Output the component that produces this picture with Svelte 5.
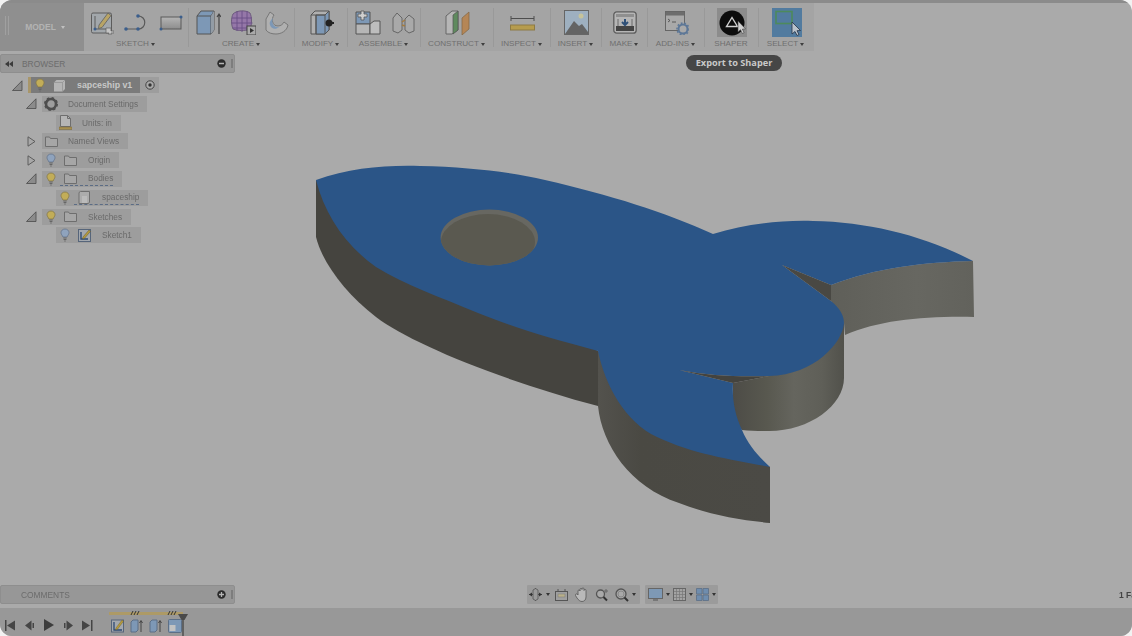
<script>
  const rows = [
    { lv: 1, exp: 'open', icon: 'gear', label: 'Document Settings' },
    { lv: 2, icon: 'doc', label: 'Units: in' },
    { lv: 1, exp: 'closed', icon: 'folder', label: 'Named Views' },
    { lv: 1, exp: 'closed', bulb: 'blue', icon: 'folder', label: 'Origin' },
    { lv: 1, exp: 'open', bulb: 'yellow', icon: 'folder', label: 'Bodies', wavy: true },
    { lv: 2, bulb: 'yellow', icon: 'body', label: 'spaceship', wavy: true },
    { lv: 1, exp: 'open', bulb: 'yellow', icon: 'folder', label: 'Sketches' },
    { lv: 2, bulb: 'blue', icon: 'sketch', label: 'Sketch1' }
  ];
</script>

{#snippet bulb(color)}
  <svg width="10" height="14" viewBox="0 0 10 14">
    <path d="M5 1C2.6 1 1 2.7 1 4.7c0 1.7 1.4 2.6 1.9 4.3h4.2C7.6 7.300 9 6.400 9 4.700 9 2.700 7.400 1 5 1z" fill={color === 'yellow' ? '#c2ad58' : '#8fa3bd'} stroke={color === 'yellow' ? '#85784a' : '#66758c'} stroke-width=".8"/>
    <path d="M3.300 10h3.400M3.600 11.500h2.800M4.300 13h1.400" stroke="#666" stroke-width="1"/>
  </svg>
{/snippet}

{#snippet folder()}
  <svg width="13" height="11" viewBox="0 0 13 11"><path d="M.5 10.500V1h4l1 1.500h7v8z" fill="#a6a6a6" stroke="#6e6e6e"/></svg>
{/snippet}

{#snippet treeIcon(name)}
  {#if name === 'gear'}
    <svg width="14" height="14" viewBox="0 0 14 14"><circle cx="7" cy="7" r="5" fill="none" stroke="#4e4e4e" stroke-width="2.600"/><circle cx="7" cy="7" r="6" fill="none" stroke="#4e4e4e" stroke-width="2" stroke-dasharray="2.400 2.300"/></svg>
  {:else if name === 'doc'}
    <svg width="13" height="15" viewBox="0 0 13 15"><path d="M1.500 11.500V.5h7l3 3v8z" fill="#b5b5b5" stroke="#6e6e6e"/><path d="M8.500.5v3h3" fill="none" stroke="#6e6e6e"/><path d="M0 12h13v2.500H0z" fill="#a68f50" stroke="#75663c" stroke-width=".5"/></svg>
  {:else if name === 'folder'}
    {@render folder()}
  {:else if name === 'body'}
    <svg width="13" height="13" viewBox="0 0 13 13"><path d="M1 12.500V1.500L2.500.5h9V11l-1 1.500z" fill="#acacac" stroke="#6e6e6e"/><path d="M4 5h5v7H4z" fill="#bbb"/></svg>
  {:else}
    <svg width="13" height="13" viewBox="0 0 13 13"><rect x=".5" y=".5" width="12" height="12" fill="#a3a8ae" stroke="#56657a"/><path d="M3 3v7h7" fill="none" stroke="#2e4a73" stroke-width="1.400"/><path d="M5 8l6-7 1.500 1.300-6 7L4.500 10z" fill="#b69c3c" stroke="#65572a" stroke-width=".5"/></svg>
  {/if}
{/snippet}

{#snippet caret()}<i class="caret"></i>{/snippet}

{#snippet panelEnd(plus)}
  <svg class="pm" width="9" height="9" viewBox="0 0 9 9"><circle cx="4.500" cy="4.500" r="4.200" fill="#2b2b2b"/><path d={plus ? 'M2 4.500h5M4.500 2v5' : 'M2 4.500h5'} stroke="#b5b5b5" stroke-width="1.300"/></svg>
  <i class="grip"></i>
{/snippet}

<div class="frame">
  <svg class="scene" viewBox="0 0 1132 636" width="1132" height="636">
    <defs>
      <linearGradient id="gBody" x1="733" x2="844" y1="0" y2="0" gradientUnits="userSpaceOnUse">
        <stop offset="0" stop-color="#4d4c47"/><stop offset=".3" stop-color="#58584f"/><stop offset=".55" stop-color="#65655e"/><stop offset=".8" stop-color="#5f5f58"/><stop offset="1" stop-color="#51514b"/>
      </linearGradient>
      <linearGradient id="gFinUp" x1="831" x2="974" y1="0" y2="0" gradientUnits="userSpaceOnUse">
        <stop offset="0" stop-color="#5f5f59"/><stop offset=".6" stop-color="#676761"/><stop offset="1" stop-color="#62625c"/>
      </linearGradient>
      <linearGradient id="gFin" x1="598" x2="770" y1="0" y2="0" gradientUnits="userSpaceOnUse">
        <stop offset="0" stop-color="#53524d"/><stop offset=".25" stop-color="#4a4943"/><stop offset="1" stop-color="#4b4a45"/>
      </linearGradient>
      <clipPath id="holeClip"><ellipse cx="489.300" cy="237.500" rx="48.700" ry="28"/></clipPath>
    </defs>
    <path d="M316 180V237C322 262 345 293 376 317C410 343 500 380 598 406V351Z" fill="#45443f"/>
    <path d="M598 351V406C602 445 630 487 679 503C710 515 740 520 770 523V467L650 400Z" fill="url(#gFin)"/>
    <path d="M733 383V403C733 415 738 425 742 430C750 431 760 431 769 431C810 431 844 405 844 378V323L769 376Z" fill="url(#gBody)"/>
    <path d="M831 285C875 268 925 262 973 261L974 317C925 316 880 320 845 335L844 323L831 301Z" fill="url(#gFinUp)"/>
    <path d="M316 180C350 168 385 165 420 166C470 167 510 172 545 180C610 195 665 212 713 234C745 224 780 220 813 221C870 222 925 236 973 261C925 262 875 268 831 285L782 265L831 301C840 308 844 316 844 323C843 342 815 375 769 376C740 377 710 376 679 370L733 383C732 400 735 415 742 430C748 445 760 458 770 467C735 460 695 455 657 437C625 422 605 385 598 351C545 337 510 326 478 313C440 297 405 285 376 267C345 245 325 215 316 180Z" fill="#2b5587"/>
    <path d="M782 265L831 285V301Z" fill="#494843"/>
    <path d="M679 370L733 383L769 376C740 377 710 376 679 370Z" fill="#44433e"/>
    <ellipse cx="489.300" cy="237.500" rx="48.700" ry="28" fill="#676761"/>
    <g clip-path="url(#holeClip)"><ellipse cx="488" cy="242" rx="47" ry="28" fill="#5a5950"/></g>
  </svg>

  <div class="strip"></div>

  <header class="toolbar">
    <div class="model"><i class="handle"></i><span>MODEL</span><i class="caret light"></i></div>

    <section class="group w105">
      <div class="icons g10">
        <svg width="23" height="24" viewBox="0 0 23 24"><rect x=".5" y="2" width="20" height="20" rx="1.500" fill="#a2a7ab" stroke="#5c5c5c"/><path d="M4 5v13h13" fill="none" stroke="#5c5c5c"/><circle cx="4" cy="18" r="1.500" fill="#3b5e8c"/><path d="M8 14L17 2l3 2.500-9 12-3.500 1z" fill="#b8a466" stroke="#5e5e5e" stroke-width=".8"/><path d="M15 17h3v-0h2v3h3v2h-3v2h-2v-2h-3z" fill="#c4c4c4" stroke="#5e5e5e" stroke-width=".7"/></svg>
        <svg width="25" height="18" viewBox="0 0 25 18"><path d="M2 15H14C23 15 23 2 14 2" fill="none" stroke="#5a5a5a" stroke-width="1.200"/><g fill="#3b5e8c"><circle cx="2" cy="15" r="1.800"/><circle cx="14" cy="15" r="1.800"/><circle cx="14" cy="2" r="1.800"/></g></svg>
        <svg width="24" height="16" viewBox="0 0 24 16"><defs><linearGradient id="rc" x1="0" y1="0" x2="0" y2="1"><stop offset="0" stop-color="#b5b5b5"/><stop offset="1" stop-color="#8d8d8d"/></linearGradient></defs><rect x="2" y="2" width="20" height="12" fill="url(#rc)" stroke="#5a5a5a"/><g fill="#3b5e8c"><circle cx="22" cy="2" r="1.500"/><circle cx="2" cy="14" r="1.500"/></g></svg>
      </div>
      <div class="label">SKETCH{@render caret()}</div>
    </section>

    <section class="group w106">
      <div class="icons g9">
        <svg width="25" height="25" viewBox="0 0 25 25"><path d="M1 6l4-5h13v19l-3 4H1z" fill="#7d98b6" stroke="#555"/><path d="M1 6h14v18M15 6l3-5" fill="none" stroke="#555"/><path d="M15 6l3-5v19l-3 4z" fill="#939ca5"/><path d="M23 24V5M21 7l2-3 2 3" fill="none" stroke="#444" stroke-width="1.200"/></svg>
        <svg width="26" height="25" viewBox="0 0 26 25"><path d="M3 4C7 0 16 0 20 3c2 4 2 12 0 16-5 2-12 2-17 0-2-5-2-11 0-15z" fill="#9577a8" stroke="#6d5b7d"/><path d="M2 8h20M1.500 13h21M3 18h18M7 1v20M12 1v21M17 1v20" stroke="#6a4e86" stroke-width=".9"/><rect x="17" y="16" width="9" height="9" fill="#aaa" stroke="#444"/><path d="M20 18l4 2.500-4 2.500z" fill="#333"/></svg>
        <svg width="24" height="24" viewBox="0 0 24 24"><path d="M5 1l4 3c-3 4-2 11 4 11 3 0 5-2 6-4l4 3c-1 6-7 9-12 9-4 0-8-1-10-4V8z" fill="#b0b0b0" stroke="#777"/><path d="M8 7c-2 5 1 10 6 9-3 3-8 2-9-2-1-3 1-5 3-7z" fill="#7d98b6"/></svg>
      </div>
      <div class="label">CREATE{@render caret()}</div>
    </section>

    <section class="group w53">
      <div class="icons">
        <svg width="25" height="25" viewBox="0 0 25 25"><path d="M2 5l4-4h14v19l-4 4H2z" fill="#b0b0b0" stroke="#555"/><path d="M7 5h9l4-4v19l-4 4H7z" fill="#7d98b6" stroke="#555"/><path d="M7 5v19M2 5h14v19" fill="none" stroke="#555"/><circle cx="20" cy="13" r="3.500" fill="#222"/><path d="M20 13h5" stroke="#222" stroke-width="2"/></svg>
      </div>
      <div class="label">MODIFY{@render caret()}</div>
    </section>

    <section class="group w73">
      <div class="icons g10">
        <svg width="26" height="25" viewBox="0 0 26 25"><path d="M1 2h14v12H1z" fill="#7d98b6" stroke="#555"/><path d="M1 14h14v10H1z" fill="#b6b6b6" stroke="#555"/><path d="M15 14l4-3h6v13H15z" fill="#bdbdbd" stroke="#555"/><path d="M3 4h3V1h3v3h3v3H9v3H6V7H3z" fill="#cfcfcf" stroke="#555" stroke-width=".8"/></svg>
        <svg width="24" height="22" viewBox="0 0 24 22"><path d="M2 19V6l4-5 5 5v12l-4 3z" fill="#a9a9a9" stroke="#666"/><path d="M14 7l4-4 5 4v12l-5 2-4-3z" fill="#a9a9a9" stroke="#666"/><path d="M11 10l3-2M11 13l3 1" stroke="#a37a3e" stroke-width="1.500"/></svg>
      </div>
      <div class="label">ASSEMBLE{@render caret()}</div>
    </section>

    <section class="group w73">
      <div class="icons">
        <svg width="25" height="25" viewBox="0 0 25 25"><path d="M1 6l6-5h6v19l-6 4H1z" fill="#b6b6b6" stroke="#666"/><path d="M8 5l5-4v19l-5 4z" fill="#5f8a5e" stroke="#555" stroke-width=".7"/><path d="M17 8l7-6v17l-7 6z" fill="#b58656" stroke="#826544" stroke-width=".7"/></svg>
      </div>
      <div class="label">CONSTRUCT{@render caret()}</div>
    </section>

    <section class="group w57">
      <div class="icons">
        <svg width="25" height="16" viewBox="0 0 25 16"><path d="M1 1v5M24 1v5M1 3.500h23" stroke="#4d4d4d"/><rect x=".5" y="10" width="24" height="5" fill="#b69c4e" stroke="#8d7a44"/></svg>
      </div>
      <div class="label">INSPECT{@render caret()}</div>
    </section>

    <section class="group w51">
      <div class="icons">
        <svg width="25" height="25" viewBox="0 0 25 25"><rect x=".5" y=".5" width="24" height="24" fill="#9eb0c0" stroke="#666"/><circle cx="17" cy="6" r="2.500" fill="#c6c39a"/><path d="M1 24L10 11l5 5 3-2 6 8v2z" fill="#646464"/></svg>
      </div>
      <div class="label">INSERT{@render caret()}</div>
    </section>

    <section class="group w46">
      <div class="icons">
        <svg width="24" height="23" viewBox="0 0 24 23"><rect x=".8" y=".8" width="22.400" height="21.400" rx="3" fill="#b5b5b5" stroke="#5e5e5e" stroke-width="1.300"/><rect x="3" y="3" width="18" height="3" fill="#8f8f8f"/><rect x="3" y="15" width="18" height="5" fill="#444"/><path d="M5 8v7M19 8v7" stroke="#6b6b6b"/><path d="M12 8v5M9 11l3 3 3-3" fill="none" stroke="#2f5078" stroke-width="2"/></svg>
      </div>
      <div class="label">MAKE{@render caret()}</div>
    </section>

    <section class="group w57">
      <div class="icons">
        <svg width="24" height="24" viewBox="0 0 24 24"><rect x=".5" y=".5" width="19" height="19" fill="#a9a9a9" stroke="#666"/><rect x="1" y="1" width="18" height="3.500" fill="#6d6d6d"/><path d="M3 8l2 1.500L3 11M7 11h4" fill="none" stroke="#444" stroke-width=".8"/><circle cx="18" cy="18" r="4.500" fill="#a9a9a9" stroke="#5d7797" stroke-width="2"/><circle cx="18" cy="18" r="6" fill="none" stroke="#5d7797" stroke-width="1.500" stroke-dasharray="1.800 1.800"/></svg>
      </div>
      <div class="label">ADD-INS{@render caret()}</div>
    </section>

    <section class="group w54">
      <div class="icons">
        <div class="hl">
          <svg width="30" height="29" viewBox="0 0 30 29"><circle cx="15" cy="15" r="12.500" fill="#0c0c0c"/><path d="M15 9.500l5.500 9h-11z" fill="none" stroke="#d0d0d0" stroke-width="1.400"/><path d="M21 13v11l2.500-2.300 1.800 3.800 1.800-.8-1.700-3.600 3.200-.2z" fill="#cfcfcf" stroke="#444" stroke-width=".6"/></svg>
        </div>
      </div>
      <div class="label plain">SHAPER</div>
    </section>

    <section class="group w55 last">
      <div class="icons">
        <div class="hl blue">
          <svg width="30" height="29" viewBox="0 0 30 29"><rect x="4" y="3.500" width="16" height="12" fill="none" stroke="#4d8a5c" stroke-width="1.600"/><path d="M20 14v12l3-2.500 2 4 2-1-2-3.800 3.500-.2z" fill="#b9c2cb" stroke="#263245" stroke-width=".8"/></svg>
        </div>
      </div>
      <div class="label">SELECT{@render caret()}</div>
    </section>
  </header>

  <div class="tip">Export to Shaper</div>

  <main class="main">
    <div class="side">
      <div class="panel">
        <svg class="back" width="8" height="6" viewBox="0 0 8 6"><path d="M4 0v6L0 3zM8 0v6L4 3z" fill="#3b3b3b"/></svg>
        <span class="ptitle">BROWSER</span>
        {@render panelEnd(false)}
      </div>

      <div class="tree">
        <div class="row lv0">
          <span class="exp"><svg width="11" height="11" viewBox="0 0 11 11"><path d="M.5 10.500L10 .8v9.700z" fill="#8b8b8b" stroke="#4a4a4a" stroke-width=".8"/></svg></span>
          <div class="rootpill">
            <div class="sel">
              <span class="slot">{@render bulb('yellow')}</span>
              <span class="slot b"><svg width="13" height="13" viewBox="0 0 13 13"><path d="M1 3.500L3.500 1h8.500v9L9.500 12.500H1z" fill="#b5b5b5"/><path d="M9.500 3.500H1M9.500 3.500V12.500M9.500 3.500L12 1" stroke="#8f8f8f" stroke-width=".7" fill="none"/></svg></span>
              <span class="rootname">sapceship v1</span>
            </div>
            <span class="radio"><svg width="10" height="10" viewBox="0 0 10 10"><circle cx="5" cy="5" r="4.200" fill="#aaa" stroke="#444"/><circle cx="5" cy="5" r="1.700" fill="#333"/></svg></span>
          </div>
        </div>

        {#each rows as r}
          <div class="row lv{r.lv}">
            <span class="exp">
              {#if r.exp === 'open'}
                <svg width="11" height="11" viewBox="0 0 11 11"><path d="M.5 10.500L10 .8v9.700z" fill="#8b8b8b" stroke="#4a4a4a" stroke-width=".8"/></svg>
              {:else if r.exp === 'closed'}
                <svg width="9" height="11" viewBox="0 0 9 11"><path d="M1 .8L8 5.500 1 10.200z" fill="#a8a8a8" stroke="#555" stroke-width=".9"/></svg>
              {/if}
            </span>
            <div class="pill">
              {#if r.bulb}<span class="slot">{@render bulb(r.bulb)}</span>{/if}
              <span class="inner" class:wavy={r.wavy}>
                <span class="slot" class:b={r.bulb}>{@render treeIcon(r.icon)}</span>
                <span class="name">{r.label}</span>
              </span>
            </div>
          </div>
        {/each}
      </div>
    </div>

    <div class="bottom">
      <div class="panel">
        <span class="ptitle indent">COMMENTS</span>
        {@render panelEnd(true)}
      </div>

      <div class="navs">
        <div class="nav n1">
          <svg width="15" height="15" viewBox="0 0 15 15"><path d="M7.500 1v13M1 7.500h13" stroke="#444" stroke-width="1"/><path d="M5 3v9l2.500 1.500L10 12V3L7.500 1.500z" fill="#9a9a9a" stroke="#555" stroke-width=".8"/><path d="M1 7.500l3-2v4zM14 7.500l-3-2v4z" fill="#333"/></svg>
          <i class="mini"></i>
          <svg class="ml9" width="13" height="13" viewBox="0 0 13 13"><rect x=".5" y="3.500" width="12" height="9" fill="#9f9f9f" stroke="#555"/><rect x="3" y="6" width="7" height="3" fill="#b9b08a" stroke="#777" stroke-width=".5"/><path d="M3 3V1M10 3V1" stroke="#555"/></svg>
          <svg class="ml6" width="14" height="15" viewBox="0 0 14 15"><path d="M3 8V4c0-1.500 2-1.500 2 0V2.500c0-1.500 2-1.500 2 0V2c0-1.500 2-1.500 2 0v1.500c0-1.500 2-1.500 2 0V10c0 3-2 4.500-4 4.500S3.500 13 2 11L.5 8.500C0 7 2 6 3 8z" fill="#b9b9b9" stroke="#555" stroke-width=".8"/></svg>
          <svg class="ml7" width="14" height="14" viewBox="0 0 14 14"><circle cx="5.500" cy="6" r="4" fill="#a9a9a9" stroke="#555" stroke-width="1.300"/><path d="M8.500 9l3.500 3.500" stroke="#333" stroke-width="2"/><path d="M11 1v4M9 3h4" stroke="#666"/></svg>
          <svg class="ml7" width="14" height="14" viewBox="0 0 14 14"><circle cx="6" cy="6" r="5" fill="#a9a9a9" stroke="#555" stroke-width="1.300"/><circle cx="6" cy="6" r="3" fill="none" stroke="#888"/><path d="M9.500 9.500l3.500 3.500" stroke="#333" stroke-width="2"/></svg>
          <i class="mini"></i>
        </div>
        <div class="nav n2">
          <svg width="15" height="14" viewBox="0 0 15 14"><rect x=".5" y=".5" width="14" height="10" fill="#7e99b5" stroke="#666"/><path d="M5 11h5v2H5z" fill="#777"/></svg>
          <i class="mini"></i>
          <svg class="ml5" width="13" height="13" viewBox="0 0 13 13"><rect x=".5" y=".5" width="12" height="12" fill="#a3a3a3" stroke="#666"/><path d="M3.500 1v11M6.500 1v11M9.500 1v11M1 3.500h11M1 6.500h11M1 9.500h11" stroke="#777" stroke-width=".7"/></svg>
          <i class="mini"></i>
          <svg class="ml5" width="13" height="13" viewBox="0 0 13 13"><path d="M.5.5h5.500v5.500H.5zM7 .5h5.500v5.500H7zM.5 7h5.500v5.500H.5zM7 7h5.500v5.500H7z" fill="#6f8dae" stroke="#5c6f86" stroke-width=".8"/></svg>
          <i class="mini"></i>
        </div>
      </div>

      <div class="status">1 Face</div>
    </div>
  </main>

  <footer class="timeline">
    <div class="controls">
      <svg width="11" height="11" viewBox="0 0 11 11"><path d="M1 0h1.500v11H1zM11 .5v10L3 5.500z" fill="#454545"/></svg>
      <svg width="11" height="11" viewBox="0 0 11 11"><path d="M7.500.5v10L1 5.500zM8.500 3h1.500v5H8.500z" fill="#454545"/></svg>
      <svg width="11" height="12" viewBox="0 0 11 12"><path d="M1 0v12l10-6z" fill="#3d3d3d"/></svg>
      <svg width="11" height="11" viewBox="0 0 11 11"><path d="M3.500.5v10l6.500-5zM1 3h1.500v5H1z" fill="#454545"/></svg>
      <svg width="11" height="11" viewBox="0 0 11 11"><path d="M9 0h1.500v11H9zM0 .5v10l8-5z" fill="#454545"/></svg>
    </div>
    <div class="steps">
      <div class="track">
        <svg width="80" height="28" viewBox="0 0 80 28">
          <path d="M0 5.500h74" stroke="#ad9a66" stroke-width="3"/>
          <path d="M22 7l2-4M25 7l2-4M28 7l2-4M59 7l2-4M62 7l2-4M65 7l2-4" stroke="#333" stroke-width="1"/>
          <path d="M69 6h10l-3.500 6h-3z" fill="#4a4a4a"/><path d="M74 10v18" stroke="#4a4a4a" stroke-width="1.400"/>
        </svg>
      </div>
      <svg width="13" height="14" viewBox="0 0 13 14"><rect x=".5" y="1" width="12" height="12" fill="#a3a8ae" stroke="#56657a"/><path d="M3 3v8h8" fill="none" stroke="#2e4a73" stroke-width="1.300"/><path d="M5 9l6-8 1.500 1.200-6 8L4.500 11z" fill="#b69c3c" stroke="#65572a" stroke-width=".4"/></svg>
      <svg width="13" height="14" viewBox="0 0 13 14"><path d="M1 3l2-2h5v10l-2 2H1z" fill="#7d98b6" stroke="#5c6f86"/><path d="M11 13V2M9.500 4L11 1.500 12.500 4" fill="none" stroke="#444"/></svg>
      <svg width="13" height="14" viewBox="0 0 13 14"><path d="M1 3l2-2h5v10l-2 2H1z" fill="#7d98b6" stroke="#5c6f86"/><path d="M11 13V2M9.500 4L11 1.500 12.500 4" fill="none" stroke="#444"/></svg>
      <svg width="14" height="14" viewBox="0 0 14 14"><rect x=".5" y=".5" width="13" height="13" rx="1" fill="#7d98b6" stroke="#5c6f86"/><rect x="1.500" y="6" width="6" height="6" fill="#c2c2c2"/></svg>
    </div>
  </footer>
</div>

<style>
  :global(body) { margin: 0; background: #f2f2f2; }

  .frame {
    position: relative;
    width: 1132px;
    height: 636px;
    overflow: hidden;
    border-radius: 12px;
    background: #aaaaaa;
    display: flex;
    flex-direction: column;
    font-family: "Liberation Sans", Arial, sans-serif;
    color: #6d6d6d;
    filter: blur(0.45px);
  }
  .scene { position: absolute; left: 0; top: 0; }
  svg { display: block; flex: none; }

  .strip { position: relative; height: 3px; background: #8b8b8b; flex: none; }

  .toolbar {
    position: relative;
    display: flex;
    width: 814px;
    height: 48px;
    flex: none;
    background: #a4a4a4;
  }
  .model {
    width: 84px;
    background: #8f8f8f;
    display: flex;
    align-items: center;
    justify-content: center;
    gap: 5px;
    font-size: 8.5px;
    font-weight: bold;
    color: #b3b3b3;
    position: relative;
    padding-left: 6px;
    box-sizing: border-box;
  }
  .handle {
    position: absolute;
    left: 5px;
    top: 13px;
    width: 2px;
    height: 19px;
    border-left: 1px solid #a0a0a0;
    border-right: 1px solid #a0a0a0;
  }
  .group {
    box-sizing: border-box;
    display: flex;
    flex-direction: column;
    align-items: center;
    position: relative;
  }
  .group::after {
    content: "";
    position: absolute;
    right: 0;
    top: 5px;
    height: 39px;
    width: 1px;
    background: #999;
  }
  .group.last::after { display: none; }
  .w105 { width: 105px; } .w106 { width: 106px; } .w53 { width: 53px; }
  .w73 { width: 73px; } .w57 { width: 57px; } .w51 { width: 51px; }
  .w46 { width: 46px; } .w54 { width: 54px; } .w55 { width: 55px; }

  .icons {
    height: 29px;
    margin-top: 5px;
    display: flex;
    align-items: center;
    justify-content: center;
  }
  .g10 { gap: 10px; }
  .g9 { gap: 9px; }
  .label {
    display: flex;
    align-items: center;
    gap: 2px;
    margin-top: 2px;
    margin-right: 2px;
    font-size: 8.1px;
    line-height: 10px;
    white-space: nowrap;
    color: #6f6f6f;
  }
  .caret {
    display: inline-block;
    width: 0;
    height: 0;
    border-left: 2.5px solid transparent;
    border-right: 2.5px solid transparent;
    border-top: 3px solid #3f3f3f;
  }
  .caret.light { border-top-color: #c0c0c0; }
  .hl { width: 30px; height: 29px; background: #8c8c8c; }
  .hl.blue { background: #527b9f; }

  .tip {
    position: absolute;
    left: 686px;
    top: 55px;
    width: 96px;
    height: 16px;
    border-radius: 8px;
    background: #464646;
    color: #c9c9c9;
    font-size: 9.2px;
    font-weight: bold;
    line-height: 16px;
    text-align: center;
    font-family: "Open Sans", "Liberation Sans", sans-serif;
    z-index: 2;
  }

  .main {
    position: relative;
    flex: 1;
    min-height: 0;
    display: flex;
    flex-direction: column;
    justify-content: space-between;
    padding: 3px 0 4px;
  }
  .panel {
    box-sizing: border-box;
    width: 235px;
    height: 19px;
    flex: none;
    display: flex;
    align-items: center;
    background: #979797;
    border: 1px solid #8e8e8e;
    border-radius: 2px;
  }
  .back { margin-left: 4px; }
  .ptitle { margin-left: 9px; font-size: 8.4px; color: #6c6c6c; }
  .ptitle.indent { margin-left: 20px; }
  .pm { margin-left: auto; }
  .grip {
    width: 2px;
    height: 9px;
    margin: 0 1px 0 5px;
    border-left: 1px solid #7d7d7d;
    border-right: 1px solid #7d7d7d;
    box-sizing: border-box;
  }

  .tree { margin-top: 4px; display: flex; flex-direction: column; gap: 2.8px; }
  .row { display: flex; align-items: center; height: 16px; box-sizing: border-box; }
  .lv0 { padding-left: 8px; }
  .lv1 { padding-left: 22px; }
  .lv2 { padding-left: 36px; }
  .exp { width: 20px; height: 16px; display: flex; align-items: center; justify-content: center; padding-right: 2px; box-sizing: border-box; }
  .rootpill { display: flex; align-items: center; height: 16px; background: #9d9d9d; }
  .sel {
    display: flex;
    align-items: center;
    height: 16px;
    background: #7b7b7b;
    border-left: 3px solid #a8966a;
    padding-right: 8px;
  }
  .rootname { margin-left: 8px; font-size: 8.8px; font-weight: bold; color: #c8c8c8; }
  .radio { width: 19px; display: flex; justify-content: center; }
  .pill { display: flex; align-items: center; height: 16px; background: #9d9d9d; padding-right: 9px; }
  .inner { display: flex; align-items: center; height: 14px; }
  .wavy { border-bottom: 1px dashed #5b6c85; }
  .slot { width: 18px; height: 16px; display: flex; align-items: center; justify-content: center; flex: none; }
  .slot.b { width: 20px; }
  .name { margin-left: 8px; font-size: 8.3px; color: #6a6a6a; white-space: nowrap; }

  .bottom { display: flex; align-items: center; height: 19px; }
  .navs { display: flex; gap: 5px; margin-left: 292px; }
  .nav {
    display: flex;
    align-items: center;
    height: 19px;
    box-sizing: border-box;
    background: #9b9b9b;
    border-radius: 1px;
  }
  .n1 { width: 113px; padding-left: 1px; }
  .n2 { width: 73px; padding-left: 3px; }
  .mini {
    width: 0;
    height: 0;
    margin-left: 3px;
    border-left: 2px solid transparent;
    border-right: 2px solid transparent;
    border-top: 3px solid #333;
  }
  .ml5 { margin-left: 3px; }
  .ml6 { margin-left: 7px; }
  .ml7 { margin-left: 6px; }
  .ml9 { margin-left: 5px; }
  .status {
    margin-left: auto;
    width: 13px;
    overflow: hidden;
    white-space: nowrap;
    font-size: 8.5px;
    font-weight: bold;
    color: #444;
  }

  .timeline {
    position: relative;
    height: 28px;
    flex: none;
    background: #989898;
    display: flex;
    align-items: flex-end;
  }
  .controls { display: flex; align-items: center; gap: 8.6px; padding: 0 0 5px 4px; width: 104px; box-sizing: border-box; }
  .steps { position: relative; display: flex; align-items: center; gap: 6px; padding: 0 0 3px 7px; }
  .track { position: absolute; left: 5px; bottom: 0; }
</style>
